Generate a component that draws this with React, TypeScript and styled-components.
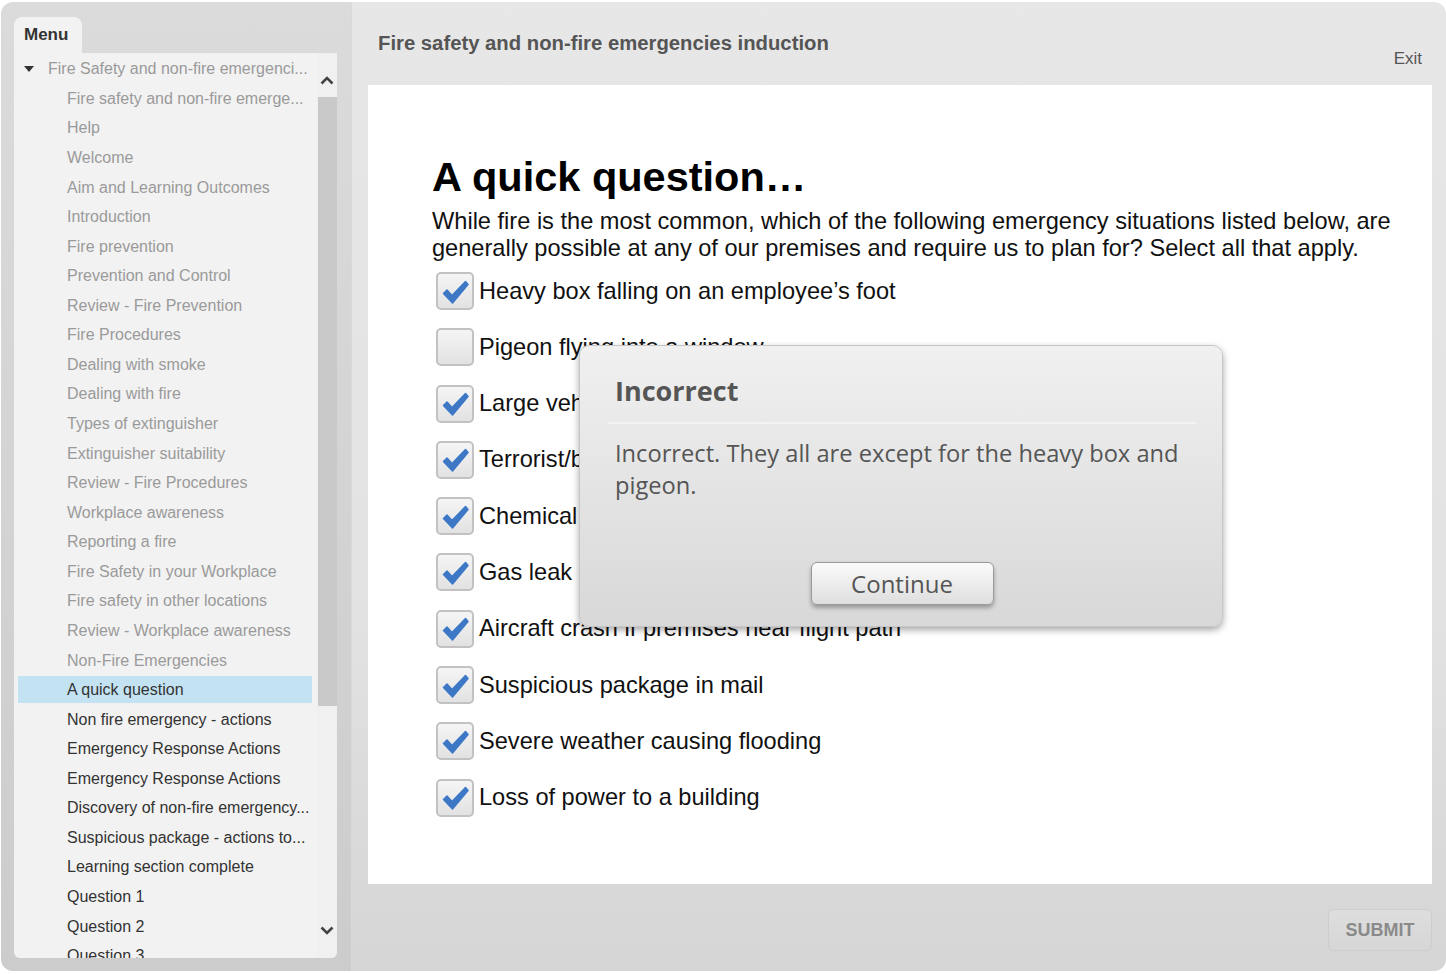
import React from "react";
import styled, { createGlobalStyle } from "styled-components";

const GlobalStyle = createGlobalStyle`
  html, body { margin: 0; padding: 0; background: #ffffff; }
  body { font-family: "Liberation Sans", Arial, sans-serif; }
  * { box-sizing: border-box; }
`;

const Frame = styled.div`
  display: flex;
  width: 1446px;
  height: 974px;
  padding: 2px 0 3px 1px;
`;

const Sidebar = styled.aside`
  width: 351px;
  flex: none;
  display: flex;
  flex-direction: column;
  padding: 15px 14px 13px 13px;
  background: linear-gradient(#dbdbdb, #cccccc);
  border-radius: 12px 0 0 12px;
  border-right: 1px solid #d9d9d9;
`;

const MenuTab = styled.div`
  width: 68px;
  height: 36px;
  padding-left: 10px;
  line-height: 36px;
  font-size: 17px;
  font-weight: bold;
  color: #333;
  background: #f2f2f2;
  border-radius: 8px 8px 0 0;
`;

const MenuBox = styled.div`
  flex: 1;
  min-height: 0;
  display: flex;
  background: #f2f2f2;
  border-radius: 0 0 6px 6px;
  overflow: hidden;
`;

const ItemList = styled.ul`
  list-style: none;
  margin: 0;
  padding: 1px 0 0 4px;
  width: 305px;
  overflow: hidden;
`;

const Row = styled.li`
  height: 29.57px;
  padding-top: 1.3px;
`;

const RowLabel = styled.div<{ $level: number; $active?: boolean; $visited?: boolean }>`
  position: relative;
  width: 294px;
  height: 27px;
  line-height: 27px;
  font-size: 16px;
  white-space: nowrap;
  overflow: hidden;
  padding-left: ${(p) => (p.$level === 0 ? 30 : 49)}px;
  color: ${(p) => (p.$visited ? "#9a9a9a" : "#333333")};
  background: ${(p) => (p.$active ? "#c3e3f2" : "transparent")};
`;

const Caret = styled.span`
  position: absolute;
  left: 6px;
  top: 11px;
  width: 0;
  height: 0;
  border-left: 5px solid transparent;
  border-right: 5px solid transparent;
  border-top: 6px solid #333;
`;

const ScrollCol = styled.div`
  width: 20px;
  flex: none;
  display: flex;
  flex-direction: column;
  align-items: center;
  background: #f0f0f0;
`;

const ArrowBox = styled.div<{ $up?: boolean }>`
  height: 44px;
  width: 20px;
  display: flex;
  justify-content: center;
  align-items: ${(p) => (p.$up ? "flex-start" : "flex-end")};
  padding: ${(p) => (p.$up ? "23px 0 0 0" : "0 0 23px 0")};
`;

const Thumb = styled.div`
  width: 19px;
  height: 609px;
  background: #c9c9c9;
`;

const Track = styled.div`
  flex: 1;
`;

const Main = styled.main`
  flex: 1;
  display: flex;
  flex-direction: column;
  background: linear-gradient(#e7e7e7 0%, #e3e3e3 60%, #d5d5d5 100%);
  border-radius: 0 12px 12px 0;
`;

const Header = styled.header`
  height: 83px;
  flex: none;
  display: flex;
  justify-content: space-between;
  padding: 0 24px 0 26px;
`;

const CourseTitle = styled.h1`
  margin: 29px 0 0 0;
  font-size: 20.3px;
  line-height: 24px;
  font-weight: bold;
  color: #555;
`;

const ExitLink = styled.a`
  align-self: flex-end;
  margin-bottom: 16px;
  font-size: 17px;
  line-height: 20px;
  color: #555;
  text-decoration: none;
`;

const Stage = styled.section`
  position: relative;
  height: 799px;
  flex: none;
  margin: 0 14px 0 16px;
  background: #ffffff;
  padding: 69px 30px 0 64px;
`;

const Heading = styled.h2`
  margin: 0;
  font-size: 41.5px;
  line-height: 46px;
  font-weight: bold;
  color: #000;
`;

const Prompt = styled.p`
  margin: 8px 0 0 0;
  font-size: 23.6px;
  line-height: 27px;
  color: #111;
`;

const Options = styled.ul`
  list-style: none;
  margin: 10px 0 0 4px;
  padding: 0;
  display: flex;
  flex-direction: column;
  gap: 18.3px;
`;

const Option = styled.li`
  display: flex;
  align-items: center;
  gap: 5px;
  height: 38px;
  font-size: 23.6px;
  color: #111;
`;

const Box = styled.span`
  width: 38px;
  height: 38px;
  flex: none;
  border: 2.5px solid #c2c2c2;
  border-radius: 5px;
  background: linear-gradient(#f5f5f5, #e2e2e2);
  display: flex;
  align-items: flex-start;
  justify-content: flex-start;
  padding: 5.5px 0 0 3.5px;
`;

const Modal = styled.div`
  position: absolute;
  left: 211px;
  top: 260px;
  width: 644px;
  height: 282px;
  display: flex;
  flex-direction: column;
  padding: 0 26px 21px 28px;
  border: 1px solid #c6c6c6;
  border-radius: 10px;
  background: linear-gradient(#f0f0f0, #d8d8d8);
  box-shadow: 0 3px 7px rgba(0, 0, 0, 0.35);
  font-family: "Open Sans", "Noto Sans", sans-serif;
  color: #555;
`;

const ModalTitle = styled.div`
  margin-top: 27px;
  padding: 0 0 13px 7px;
  border-bottom: 2px solid #f4f4f4;
  font-size: 27px;
  line-height: 36px;
  font-weight: bold;
`;

const ModalBody = styled.div`
  margin-top: 13px;
  padding-left: 7px;
  font-size: 23.66px;
  line-height: 32px;
`;

const ContinueButton = styled.button`
  margin: auto auto 0 auto;
  width: 183px;
  height: 43px;
  border: 1px solid #9a9a9a;
  border-radius: 6px;
  background: linear-gradient(#fbfbfb, #dedede);
  box-shadow: 0 3px 4px rgba(0, 0, 0, 0.3);
  font-family: "Open Sans", "Noto Sans", sans-serif;
  font-size: 24px;
  color: #555;
  padding: 0;
`;

const Footer = styled.footer`
  flex: 1;
  display: flex;
  justify-content: flex-end;
  align-items: flex-start;
  padding: 25px 14px 0 0;
`;

const SubmitButton = styled.button`
  width: 104px;
  height: 42px;
  border: 1px solid #cdcdcd;
  border-radius: 6px;
  background: linear-gradient(#dedede, #d6d6d6);
  font-family: "Liberation Sans", Arial, sans-serif;
  font-weight: bold;
  font-size: 18px;
  color: #8a8a8a;
  padding: 0;
`;

const Check = () => (
  <svg width="27" height="25" viewBox="0 0 27 25">
    <path
      d="M1.5 13.5 L5 10 L10 15.5 L23.5 1.5 L26 4.5 L10.5 23 Z"
      fill="#3d78c6"
      stroke="#3d78c6"
      strokeWidth="1.5"
      strokeLinejoin="round"
    />
  </svg>
);

const Chevron = ({ up }: { up?: boolean }) => (
  <svg width="14" height="9" viewBox="0 0 14 9">
    <path
      d={up ? "M1.5 7.5 L7 2 L12.5 7.5" : "M1.5 1.5 L7 7 L12.5 1.5"}
      fill="none"
      stroke="#444"
      strokeWidth="2.6"
    />
  </svg>
);

const menu: { label: string; level: number; visited?: boolean; active?: boolean }[] = [
  { label: "Fire Safety and non-fire emergenci...", level: 0, visited: true },
  { label: "Fire safety and non-fire emerge...", level: 1, visited: true },
  { label: "Help", level: 1, visited: true },
  { label: "Welcome", level: 1, visited: true },
  { label: "Aim and Learning Outcomes", level: 1, visited: true },
  { label: "Introduction", level: 1, visited: true },
  { label: "Fire prevention", level: 1, visited: true },
  { label: "Prevention and Control", level: 1, visited: true },
  { label: "Review - Fire Prevention", level: 1, visited: true },
  { label: "Fire Procedures", level: 1, visited: true },
  { label: "Dealing with smoke", level: 1, visited: true },
  { label: "Dealing with fire", level: 1, visited: true },
  { label: "Types of extinguisher", level: 1, visited: true },
  { label: "Extinguisher suitability", level: 1, visited: true },
  { label: "Review - Fire Procedures", level: 1, visited: true },
  { label: "Workplace awareness", level: 1, visited: true },
  { label: "Reporting a fire", level: 1, visited: true },
  { label: "Fire Safety in your Workplace", level: 1, visited: true },
  { label: "Fire safety in other locations", level: 1, visited: true },
  { label: "Review - Workplace awareness", level: 1, visited: true },
  { label: "Non-Fire Emergencies", level: 1, visited: true },
  { label: "A quick question", level: 1, active: true },
  { label: "Non fire emergency - actions", level: 1 },
  { label: "Emergency Response Actions", level: 1 },
  { label: "Emergency Response Actions", level: 1 },
  { label: "Discovery of non-fire emergency...", level: 1 },
  { label: "Suspicious package - actions to...", level: 1 },
  { label: "Learning section complete", level: 1 },
  { label: "Question 1", level: 1 },
  { label: "Question 2", level: 1 },
  { label: "Question 3", level: 1 },
];

const options: { label: string; checked: boolean }[] = [
  { label: "Heavy box falling on an employee\u2019s foot", checked: true },
  { label: "Pigeon flying into a window", checked: false },
  { label: "Large vehicle crash into building", checked: true },
  { label: "Terrorist/bomb threat", checked: true },
  { label: "Chemical spill or release", checked: true },
  { label: "Gas leak", checked: true },
  { label: "Aircraft crash if premises near flight path", checked: true },
  { label: "Suspicious package in mail", checked: true },
  { label: "Severe weather causing flooding", checked: true },
  { label: "Loss of power to a building", checked: true },
];

export default function App() {
  return (
    <>
      <GlobalStyle />
      <Frame>
        <Sidebar>
          <MenuTab>Menu</MenuTab>
          <MenuBox>
            <ItemList>
              {menu.map((m, i) => (
                <Row key={i}>
                  <RowLabel $level={m.level} $active={m.active} $visited={m.visited}>
                    {m.level === 0 && <Caret />}
                    {m.label}
                  </RowLabel>
                </Row>
              ))}
            </ItemList>
            <ScrollCol>
              <ArrowBox $up>
                <Chevron up />
              </ArrowBox>
              <Thumb />
              <Track />
              <ArrowBox>
                <Chevron />
              </ArrowBox>
            </ScrollCol>
          </MenuBox>
        </Sidebar>
        <Main>
          <Header>
            <CourseTitle>Fire safety and non-fire emergencies induction</CourseTitle>
            <ExitLink href="#">Exit</ExitLink>
          </Header>
          <Stage>
            <Heading>A quick question…</Heading>
            <Prompt>
              While fire is the most common, which of the following emergency situations listed below, are
              generally possible at any of our premises and require us to plan for? Select all that apply.
            </Prompt>
            <Options>
              {options.map((o, i) => (
                <Option key={i}>
                  <Box>{o.checked && <Check />}</Box>
                  {o.label}
                </Option>
              ))}
            </Options>
            <Modal>
              <ModalTitle>Incorrect</ModalTitle>
              <ModalBody>Incorrect. They all are except for the heavy box and pigeon.</ModalBody>
              <ContinueButton>Continue</ContinueButton>
            </Modal>
          </Stage>
          <Footer>
            <SubmitButton>SUBMIT</SubmitButton>
          </Footer>
        </Main>
      </Frame>
    </>
  );
}
